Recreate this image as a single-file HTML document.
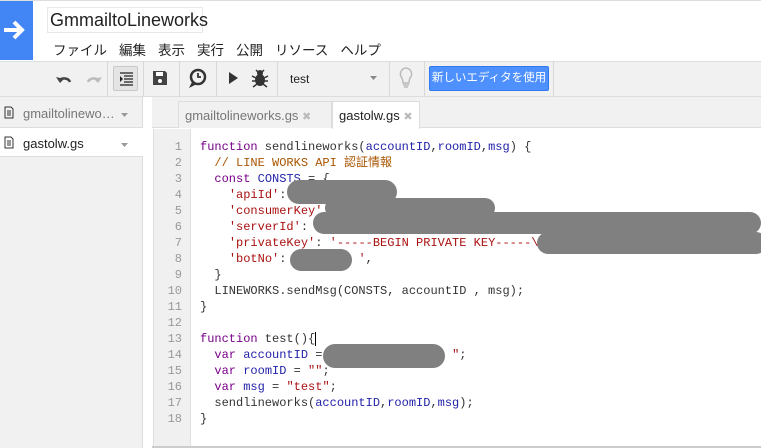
<!DOCTYPE html>
<html><head><meta charset="utf-8">
<style>
*{margin:0;padding:0;box-sizing:border-box}
body{width:761px;height:448px;overflow:hidden;background:#fff;font-family:"Liberation Sans","Noto Sans CJK JP",sans-serif;position:relative}
.abs{position:absolute}
.logo{left:0;top:0;width:33px;height:60px;background:#4285f4}
.title{left:47px;top:7px;width:156px;height:26px;border:1px solid #e8e8e8;font-size:18px;color:#222;padding:2px 2px;line-height:20px;white-space:nowrap}
.menu{top:39px;left:53px;font-size:13.5px;color:#222;white-space:nowrap}
.menu span{margin-right:12px}
.tb{left:0;top:61px;width:761px;height:36px;background:#f1f1f1;border-top:1px solid #ddd;border-bottom:1px solid #ddd}
.sep{top:61px;width:1px;height:36px;background:#d8d8d8}
.code{font-family:"Liberation Mono",monospace;font-size:12px;line-height:16px;white-space:pre;color:#333}
.k{color:#708}.v{color:#22a}.s{color:#a11}.c{color:#a50}
.blob{background:#808080;border-radius:12px}
.tab{white-space:nowrap;font-size:13px}
</style></head><body>
<div class="abs logo"><svg width="33" height="60"><path d="M4 30h17M14 22l8 8-8 8" stroke="#fff" stroke-width="4" fill="none"/></svg></div>
<div class="abs" style="left:0;top:0;width:761px;height:1px;background:#ddd"></div>
<div class="abs title">GmmailtoLineworks</div>
<div class="abs menu"><span>ファイル</span><span>編集</span><span>表示</span><span>実行</span><span>公開</span><span>リソース</span><span>ヘルプ</span></div>
<div class="abs tb"></div>
<div class="abs sep" style="left:107px"></div><div class="abs sep" style="left:143px"></div><div class="abs sep" style="left:179px"></div><div class="abs sep" style="left:216px"></div><div class="abs sep" style="left:277px"></div><div class="abs sep" style="left:389px"></div><div class="abs sep" style="left:424px"></div><div class="abs sep" style="left:553px"></div>
<svg class="abs" style="left:55px;top:70px" width="48" height="18"><path d="M4 11a6 5 0 0 1 11 1" stroke="#444" stroke-width="2.5" fill="none"/><path d="M1 7l4 6 4-4z" fill="#444"/><path d="M44 11a6 5 0 0 0-11 1" stroke="#bbb" stroke-width="2.5" fill="none"/><path d="M47 7l-4 6-4-4z" fill="#bbb"/></svg>
<div class="abs" style="left:113px;top:66px;width:25px;height:25px;background:#e4e4e4;border:1px solid #c8c8c8;border-radius:2px"></div>
<svg class="abs" style="left:117px;top:70px" width="18" height="18"><path d="M3 3h13M7 6h9M7 9h9M7 12h9M3 15h13" stroke="#222" stroke-width="1.3"/><path d="M3 6l3 3-3 3z" fill="#222"/></svg>
<svg class="abs" style="left:152px;top:70px" width="16" height="16"><path d="M1 1h12l2 2v12H1z" fill="#444"/><rect x="4" y="2" width="7" height="4" fill="#fff"/><circle cx="8" cy="11" r="2" fill="#fff"/></svg>
<svg class="abs" style="left:188px;top:66px" width="20" height="24"><circle cx="10" cy="11" r="7" stroke="#333" stroke-width="2.5" fill="none"/><path d="M10 7v4h3M5 16l-2 4 4-2" stroke="#333" stroke-width="1.8" fill="none"/></svg>
<svg class="abs" style="left:226px;top:71px" width="14" height="14"><path d="M3 1l9 6-9 6z" fill="#333"/></svg>
<svg class="abs" style="left:251px;top:68px" width="18" height="20"><ellipse cx="9" cy="12" rx="5" ry="6" fill="#333"/><circle cx="9" cy="5" r="3" fill="#333"/><path d="M1 8l4 2M17 8l-4 2M1 13h4M17 13h-4M2 19l4-3M16 19l-4-3M5 2l2 2M13 2l-2 2" stroke="#333" stroke-width="1.5"/></svg>
<div class="abs" style="left:290px;top:72px;font-size:12px;color:#222">test</div>
<svg class="abs" style="left:370px;top:76px" width="8" height="5"><path d="M0 0h7l-3.5 4z" fill="#888"/></svg>
<svg class="abs" style="left:398px;top:66px" width="16" height="24"><path d="M8 2a6 6 0 0 0-4 10c1 2 1 3 1 5h6c0-2 0-3 1-5a6 6 0 0 0-4-10z" stroke="#bbb" stroke-width="1.5" fill="none"/><path d="M5 19h6M6 21h4" stroke="#bbb" stroke-width="1.5"/></svg>
<div class="abs" style="left:429px;top:66px;width:120px;height:25px;background:#4d90fe;border:1px solid #3079ed;border-radius:2px;color:#fff;font-size:11.5px;line-height:23px;text-align:center;white-space:nowrap;overflow:hidden">新しいエディタを使用</div>
<!-- sidebar -->
<div class="abs" style="left:0;top:97px;width:143px;height:351px;background:#f1f1f1;border-right:1px solid #ddd"></div>
<div class="abs" style="left:0;top:127px;width:143px;height:30px;background:#fff;border-top:1px solid #ddd;border-bottom:1px solid #ddd"></div>
<svg class="abs" style="left:4px;top:106px" width="10" height="13"><path d="M1 1h6l2 2v9H1z" stroke="#333" fill="none"/><path d="M3 5h4M3 7h4M3 9h4" stroke="#333"/></svg>
<div class="abs tab" style="left:23px;top:106px;color:#777">gmailtolinewo…</div>
<svg class="abs" style="left:121px;top:113px" width="8" height="5"><path d="M0 0h7l-3.5 4z" fill="#999"/></svg>
<svg class="abs" style="left:4px;top:136px" width="10" height="13"><path d="M1 1h6l2 2v9H1z" stroke="#333" fill="none"/><path d="M3 5h4M3 7h4M3 9h4" stroke="#333"/></svg>
<div class="abs tab" style="left:23px;top:136px;color:#222">gastolw.gs</div>
<svg class="abs" style="left:121px;top:143px" width="8" height="5"><path d="M0 0h7l-3.5 4z" fill="#999"/></svg>
<!-- tabs -->
<div class="abs" style="left:152px;top:97px;width:609px;height:31px;background:#f1f1f1;border-bottom:1px solid #ddd"></div>
<div class="abs tab" style="left:178px;top:101px;width:154px;height:27px;border:1px solid #ddd;border-bottom:none;background:#f1f1f1;color:#777;padding:6px 0 0 6px">gmailtolineworks.gs <span style="color:#bbb;font-size:11px">✖</span></div>
<div class="abs tab" style="left:332px;top:101px;width:88px;height:28px;border:1px solid #ddd;border-bottom:none;background:#fff;color:#222;padding:6px 0 0 6px">gastolw.gs <span style="color:#bbb;font-size:11px">✖</span></div>
<!-- gutter -->
<div class="abs" style="left:153px;top:129px;width:38px;height:317px;background:#f0f0f0;border-left:1px solid #ddd;border-right:1px solid #e0e0e0"></div>
<div class="abs" style="left:152px;top:446px;width:609px;height:2px;background:#ccc"></div>
<div class="abs code" style="left:153px;top:139px;width:29px;text-align:right;color:#999">1
2
3
4
5
6
7
8
9
10
11
12
13
14
15
16
17
18</div>
<div class="abs code" style="left:200px;top:139px"><span class="k">function</span> sendlineworks(<span class="v">accountID</span>,<span class="v">roomID</span>,<span class="v">msg</span>) {
  <span class="c">// LINE WORKS API 認証情報</span>
  <span class="k">const</span> <span class="v">CONSTS</span> = {
    <span class="s">'apiId'</span>:
    <span class="s">'consumerKey'</span>:
    <span class="s">'serverId'</span>:
    <span class="s">'privateKey'</span>: <span class="s">'-----BEGIN PRIVATE KEY-----\</span>
    <span class="s">'botNo'</span>:          <span class="s">'</span>,
  }
  LINEWORKS.sendMsg(CONSTS, accountID , msg);
}

<span class="k">function</span> test(){<span style="border-left:1px solid #000"></span>
  <span class="k">var</span> <span class="v">accountID</span> =                  <span class="s">"</span>;
  <span class="k">var</span> <span class="v">roomID</span> = <span class="s">""</span>;
  <span class="k">var</span> <span class="v">msg</span> = <span class="s">"test"</span>;
  sendlineworks(<span class="v">accountID</span>,<span class="v">roomID</span>,<span class="v">msg</span>);
}</div>
<div class="abs blob" style="left:287px;top:180px;width:110px;height:24px"></div>
<div class="abs blob" style="left:325px;top:198px;width:170px;height:20px"></div>
<div class="abs blob" style="left:313px;top:212px;width:448px;height:22px"></div>
<div class="abs blob" style="left:537px;top:232px;width:230px;height:22px"></div>
<div class="abs blob" style="left:290px;top:249px;width:62px;height:22px;border-radius:11px"></div>
<div class="abs blob" style="left:323px;top:344px;width:122px;height:24px"></div>
</body></html>
